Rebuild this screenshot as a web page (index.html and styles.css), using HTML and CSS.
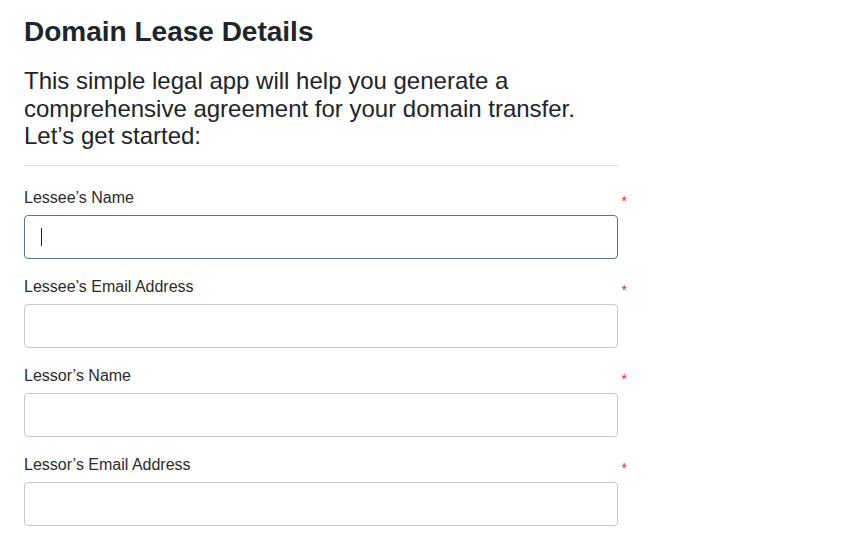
FILE: index.html
```html
<!DOCTYPE html>
<html lang="en">
<head>
<meta charset="utf-8">
<title>Domain Lease Details</title>
<link rel="stylesheet" href="styles.css">
</head>
<body>
<main class="page">
  <h1 class="title">Domain Lease Details</h1>
  <p class="intro">This simple legal app will help you generate a comprehensive agreement for your domain transfer. Let’s get started:</p>
  <hr class="divider">
  <form class="form">
    <div class="field">
      <div class="label-row"><label class="label" for="f1">Lessee’s Name</label><span class="req">*</span></div>
      <div class="input focused" id="f1"><span class="caret"></span></div>
    </div>
    <div class="field">
      <div class="label-row"><label class="label" for="f2">Lessee’s Email Address</label><span class="req">*</span></div>
      <div class="input" id="f2"></div>
    </div>
    <div class="field">
      <div class="label-row"><label class="label" for="f3">Lessor’s Name</label><span class="req">*</span></div>
      <div class="input" id="f3"></div>
    </div>
    <div class="field">
      <div class="label-row"><label class="label" for="f4">Lessor’s Email Address</label><span class="req">*</span></div>
      <div class="input" id="f4"></div>
    </div>
  </form>
</main>
</body>
</html>
```

FILE: styles.css
```css
html, body {
  margin: 0;
  padding: 0;
  background: #ffffff;
}
body {
  font-family: "Liberation Sans", Arial, Helvetica, sans-serif;
  color: #212529;
}
.page {
  width: 594px;
  padding: 16px 0 0 24px;
}
.title {
  font-size: 28px;
  font-weight: 700;
  line-height: 32px;
  margin: 0 0 19px;
  color: #212529;
}
.intro {
  font-size: 24px;
  line-height: 27.5px;
  margin: 0;
  color: #212529;
}
.divider {
  border: 0;
  border-top: 1px solid #dcdcdc;
  margin: 15px 0 22px;
}
.form {
  display: flex;
  flex-direction: column;
  gap: 18px;
}
.field {
  display: flex;
  flex-direction: column;
  gap: 7px;
}
.label-row {
  display: flex;
  justify-content: space-between;
  align-items: flex-start;
  height: 20px;
}
.label {
  font-size: 16px;
  line-height: 20px;
  color: #2b2b2b;
}
.req {
  color: #ee2040;
  font-size: 14px;
  line-height: 20px;
  margin-right: -9px;
  padding-top: 3px;
}
.input {
  height: 42px;
  border: 1px solid #c8c8c8;
  border-radius: 4px;
  background: #fff;
  display: flex;
  align-items: center;
  padding-left: 16px;
}
.input.focused {
  border-color: #5b7290;
}
.caret {
  width: 1px;
  height: 18px;
  background: #222;
}
```
